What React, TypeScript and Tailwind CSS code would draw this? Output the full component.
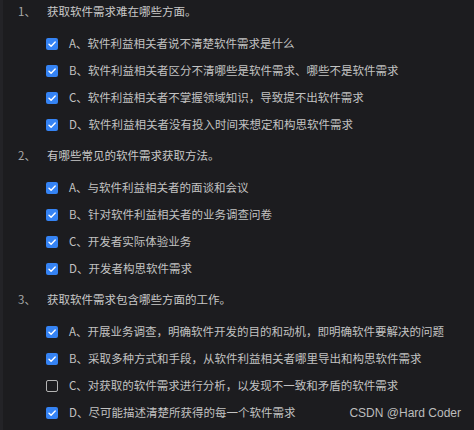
import React from 'react'

interface Question {
  no: string
  title: string
  options: { text: string; checked: boolean }[]
}

const questions: Question[] = [
  {
    no: '1、',
    title: '获取软件需求难在哪些方面。',
    options: [
      { text: 'A、软件利益相关者说不清楚软件需求是什么', checked: true },
      { text: 'B、软件利益相关者区分不清哪些是软件需求、哪些不是软件需求', checked: true },
      { text: 'C、软件利益相关者不掌握领域知识，导致提不出软件需求', checked: true },
      { text: 'D、软件利益相关者没有投入时间来想定和构思软件需求', checked: true },
    ],
  },
  {
    no: '2、',
    title: '有哪些常见的软件需求获取方法。',
    options: [
      { text: 'A、与软件利益相关者的面谈和会议', checked: true },
      { text: 'B、针对软件利益相关者的业务调查问卷', checked: true },
      { text: 'C、开发者实际体验业务', checked: true },
      { text: 'D、开发者构思软件需求', checked: true },
    ],
  },
  {
    no: '3、',
    title: '获取软件需求包含哪些方面的工作。',
    options: [
      { text: 'A、开展业务调查，明确软件开发的目的和动机，即明确软件要解决的问题', checked: true },
      { text: 'B、采取多种方式和手段，从软件利益相关者哪里导出和构思软件需求', checked: true },
      { text: 'C、对获取的软件需求进行分析，以发现不一致和矛盾的软件需求', checked: false },
      { text: 'D、尽可能描述清楚所获得的每一个软件需求', checked: true },
    ],
  },
]

function Checkbox({ checked }: { checked: boolean }) {
  if (!checked) {
    return <span className="w-3 h-3 shrink-0 rounded-[2px] border-[1.5px] border-[#b4b4b4]" />
  }
  return (
    <span className="w-3 h-3 shrink-0 rounded-[2px] bg-[#3583f4] flex items-center justify-center">
      <svg viewBox="0 0 12 12" className="w-3 h-3">
        <path d="M3 6.2 L5.1 8.2 L9.2 3.9" fill="none" stroke="#fff" strokeWidth="1.4" strokeLinecap="round" strokeLinejoin="round" />
      </svg>
    </span>
  )
}

export default function App() {
  return (
    <div
      className="relative w-[474px] h-[430px] overflow-hidden bg-[#1c1c1f] border-l-[3px] border-[#232327] text-[11.5px] text-[#c2c2c2]"
      style={{ fontFamily: '"Noto Sans CJK SC", "Noto Sans", sans-serif' }}
    >
      <div className="flex flex-col gap-[6px]">
        {questions.map((q) => (
          <div key={q.no} className="flex flex-col">
            <div className="h-6 flex items-center">
              <span className="w-[44px] pl-[15px] text-[#a8a8a8]">{q.no}</span>
              <span className="text-[#c8c8c8]">{q.title}</span>
            </div>
            <div className="flex flex-col pt-[6px]">
              {q.options.map((o) => (
                <div key={o.text} className="h-[27px] flex items-center pl-[43px] gap-[11px] whitespace-nowrap">
                  <Checkbox checked={o.checked} />
                  <span>{o.text}</span>
                </div>
              ))}
            </div>
          </div>
        ))}
      </div>
      <div
        className="absolute right-[13px] bottom-[8px] text-[12px] text-[#bdbdbd]"
        style={{ fontFamily: '"Liberation Sans", Arial, sans-serif' }}
      >
        CSDN @Hard Coder
      </div>
    </div>
  )
}
